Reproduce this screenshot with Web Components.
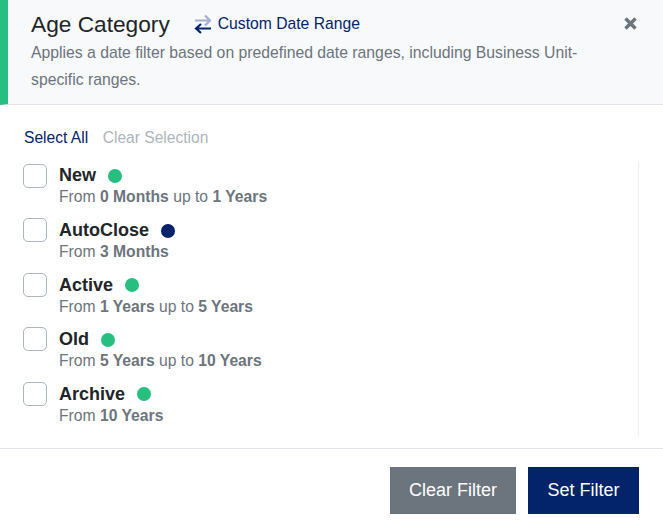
<!DOCTYPE html>
<html lang="en">
<head>
<meta charset="utf-8">
<title>Age Category</title>
<style>
    html, body { margin: 0; padding: 0; background: #fff; }
    body { font-family: "Liberation Sans", Arial, sans-serif; width: 663px; height: 532px; overflow: hidden; }
</style>
</head>
<body>
<filter-dialog>
    <filter-header slot="header" heading="Age Category" link="Custom Date Range">
        Applies a date filter based on predefined date ranges, including Business Unit-specific ranges.
    </filter-header>
    <age-option name="New" color="#26bf7f">From <b>0 Months</b> up to <b>1 Years</b></age-option>
    <age-option name="AutoClose" color="#03236b">From <b>3 Months</b></age-option>
    <age-option name="Active" color="#26bf7f">From <b>1 Years</b> up to <b>5 Years</b></age-option>
    <age-option name="Old" color="#26bf7f">From <b>5 Years</b> up to <b>10 Years</b></age-option>
    <age-option name="Archive" color="#26bf7f">From <b>10 Years</b></age-option>
</filter-dialog>

<script>
class FilterHeader extends HTMLElement {
    connectedCallback() {
        const heading = this.getAttribute('heading') || '';
        const link = this.getAttribute('link') || '';
        this.attachShadow({ mode: 'open' }).innerHTML = `
            <style>
                :host {
                    display: block;
                    box-sizing: border-box;
                    height: 105px;
                    background: #f8f9fb;
                    border-bottom: 1px solid #e1e3e8;
                    border-left: 8px solid #26bf7f;
                    padding: 9px 24px 0 23px;
                    position: relative;
                }
                .top { display: flex; align-items: center; height: 30px; }
                h2 { margin: 0; font-size: 22.700px; font-weight: 400; color: #212529; line-height: 30px; }
                .link { display: flex; align-items: center; margin-left: 24px; font-size: 15.700px; color: #03236b; }
                .link svg { margin-right: 6px; }
                p { margin: 0; font-size: 15.750px; line-height: 27px; color: #6c757d; width: 570px; }
                .close { position: absolute; top: 17px; right: 26px; width: 13px; height: 13px; }
            </style>
            <div class="top">
                <h2>${heading}</h2>
                <span class="link">
                    <svg width="18" height="20" viewBox="0 0 18 20" fill="none" stroke-width="2.2">
                        <path d="M1 6.500h15M11 1.500l5 5-5 5" stroke="#a3b0cf"/>
                        <path d="M17 14.500H2M7 10l-5 4.500 5 4.500" stroke="#03236b"/>
                    </svg>
                    ${link}
                </span>
            </div>
            <p><slot></slot></p>
            <svg class="close" viewBox="0 0 13 13" stroke="#6c757d" stroke-width="3.400"><path d="M1.500 1.500l10 10M11.500 1.500l-10 10"/></svg>
        `;
    }
}
customElements.define('filter-header', FilterHeader);

class AgeOption extends HTMLElement {
    connectedCallback() {
        const name = this.getAttribute('name') || '';
        const color = this.getAttribute('color') || '#26bf7f';
        this.attachShadow({ mode: 'open' }).innerHTML = `
            <style>
                :host { display: flex; height: 54.600px; }
                .box {
                    box-sizing: border-box;
                    width: 24px; height: 24px;
                    margin: 2.600px 12px 0 0;
                    background: #fff;
                    border: 1px solid #adb5bd;
                    border-radius: 5px;
                }
                .name { display: flex; align-items: center; height: 22px; margin-top: 3.950px; font-size: 18px; font-weight: 700; color: #212529; }
                .dot { width: 14px; height: 14px; border-radius: 50%; margin-left: 12px; }
                .sub { font-size: 15.700px; line-height: 19px; margin-top: .400px; color: #6c757d; }
                ::slotted(b) { font-weight: 700; }
            </style>
            <span class="box"></span>
            <div>
                <div class="name">${name}<span class="dot" style="background:${color}"></span></div>
                <div class="sub"><slot></slot></div>
            </div>
        `;
    }
}
customElements.define('age-option', AgeOption);

class FilterDialog extends HTMLElement {
    constructor() {
        super();
        this.attachShadow({ mode: 'open' }).innerHTML = `
            <style>
                :host { display: block; height: 532px; background: #fff; }
                .actions { display: flex; gap: 14.500px; padding: 24px 24px 0; height: 36px; box-sizing: content-box; font-size: 15.600px; }
                .actions span { line-height: 18px; }
                .select { color: #03236b; }
                .clear { color: #adb5bd; }
                .list { margin: -4px 24px 0 23px; height: 275px; border-right: 1px solid #eceef1; }
                .footer {
                    margin-top: 12px;
                    border-top: 1px solid #e1e3e8;
                    padding: 18px 24px 0 0;
                    display: flex;
                    justify-content: flex-end;
                    gap: 12px;
                }
                button {
                    height: 47px;
                    border: 0;
                    border-radius: 0;
                    font: 400 18px "Liberation Sans", Arial, sans-serif;
                    color: #fff;
                }
                .btn-clear { width: 126px; background: #6c757d; }
                .btn-set { width: 111px; background: #03236b; }
            </style>
            <slot name="header"></slot>
            <div class="actions">
                <span class="select">Select All</span>
                <span class="clear">Clear Selection</span>
            </div>
            <div class="list"><slot></slot></div>
            <div class="footer">
                <button class="btn-clear">Clear Filter</button>
                <button class="btn-set">Set Filter</button>
            </div>
        `;
    }
}
customElements.define('filter-dialog', FilterDialog);
</script>
</body>
</html>
